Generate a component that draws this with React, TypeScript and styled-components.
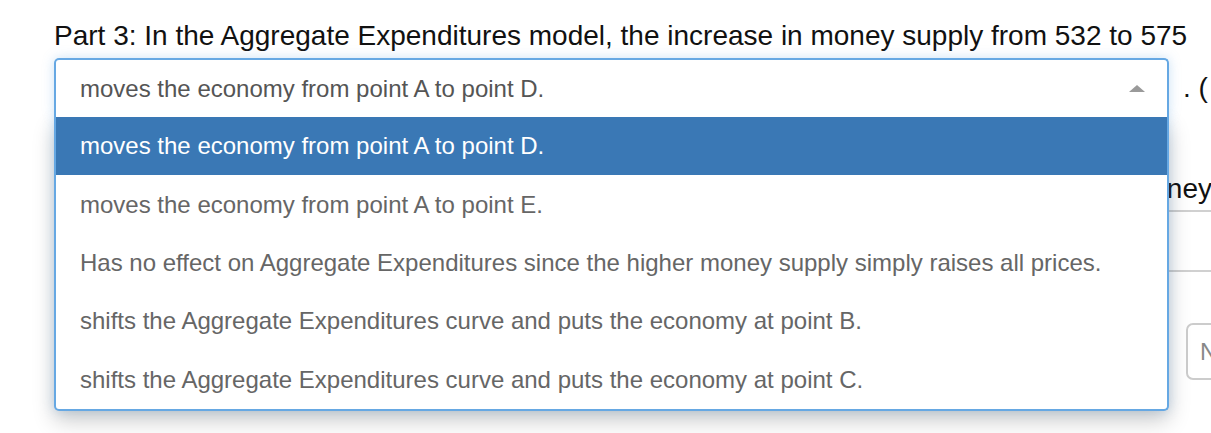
import React from 'react';
import styled, { createGlobalStyle } from 'styled-components';

const GlobalStyle = createGlobalStyle`
  html, body {
    margin: 0;
    padding: 0;
    background: #ffffff;
    font-family: 'Liberation Sans', Arial, sans-serif;
  }
  html {
    overflow: hidden;
  }
`;

const Page = styled.div`
  width: 1211px;
  height: 433px;
  overflow: hidden;
  padding: 16px 0 0 54px;
  box-sizing: border-box;
`;

const Question = styled.p`
  margin: 0;
  font-size: 28px;
  line-height: 40px;
  color: #111;
  white-space: nowrap;
`;

const AnswerRow = styled.div`
  display: flex;
  align-items: center;
  height: 59px;
  margin-top: 2px;
`;

const After = styled.span`
  font-size: 28px;
  color: #111;
  margin-left: 14px;
  white-space: nowrap;
`;

const SelectWrap = styled.div`
  position: relative;
  flex: 0 0 1115px;
  height: 59px;
`;

const Control = styled.div`
  display: flex;
  align-items: center;
  justify-content: space-between;
  height: 59px;
  box-sizing: border-box;
  padding: 0 22px 0 24px;
  border: 2px solid #66a8e3;
  border-bottom: none;
  border-radius: 5px 5px 0 0;
  background: #fff;
  position: relative;
  z-index: 3;
  font-size: 24px;
  color: #555;
`;

const Caret = styled.span`
  width: 0;
  height: 0;
  border-left: 8px solid transparent;
  border-right: 8px solid transparent;
  border-bottom: 7px solid #9a9a9a;
`;

const Menu = styled.ul`
  position: absolute;
  left: 0;
  right: 0;
  top: 59px;
  margin: 0;
  padding: 0;
  list-style: none;
  background: #fff;
  border: 2px solid #66a8e3;
  border-top: none;
  border-radius: 0 0 5px 5px;
  z-index: 2;
  box-shadow: 0 10px 22px rgba(0, 0, 0, 0.2), 0 0 12px rgba(102, 168, 227, 0.3);
  overflow: hidden;
`;

const Glow = styled.div`
  position: absolute;
  inset: 0;
  box-shadow: 0 0 12px rgba(102, 168, 227, 0.35);
  border-radius: 5px;
  z-index: 1;
`;

const Option = styled.li<{ $active?: boolean }>`
  height: 58.4px;
  display: flex;
  align-items: center;
  padding: 0 24px;
  font-size: 24px;
  color: ${p => (p.$active ? '#ffffff' : '#666')};
  background: ${p => (p.$active ? '#3a78b5' : 'transparent')};
  white-space: nowrap;
`;

const Line = styled.p`
  margin: 52px 0 0;
  font-size: 28px;
  line-height: 40px;
  color: #111;
  white-space: nowrap;
`;

const Rule = styled.hr<{ $gap: number }>`
  margin: ${p => p.$gap}px 0 0;
  border: none;
  border-top: 2px solid #d0d0d0;
`;

const InputRow = styled.div`
  display: flex;
  padding: 51px 0 0 1132px;
`;

const Input = styled.div`
  flex: 0 0 160px;
  height: 57px;
  box-sizing: border-box;
  border: 2px solid #ccc;
  border-radius: 7px;
  display: flex;
  align-items: center;
  padding-left: 12px;
  font-size: 24px;
  color: #888;
`;

const options = [
  'moves the economy from point A to point D.',
  'moves the economy from point A to point E.',
  'Has no effect on Aggregate Expenditures since the higher money supply simply raises all prices.',
  'shifts the Aggregate Expenditures curve and puts the economy at point B.',
  'shifts the Aggregate Expenditures curve and puts the economy at point C.',
];

const App: React.FC = () => {
  const selected = options[0];
  return (
    <>
      <GlobalStyle />
      <Page>
        <Question>
          Part 3: In the Aggregate Expenditures model, the increase in money supply from 532 to 575
        </Question>
        <AnswerRow>
          <SelectWrap>
            <Glow />
            <Control>
              <span>{selected}</span>
              <Caret />
            </Control>
            <Menu>
              {options.map(o => (
                <Option key={o} $active={o === selected}>
                  {o}
                </Option>
              ))}
            </Menu>
          </SelectWrap>
          <After>. (</After>
        </AnswerRow>
        <Line>
          Part 4: In the Aggregate Expenditures model, the increase in the domestic stock of the money supply
        </Line>
        <Rule $gap={1} />
        <Rule $gap={58} />
        <InputRow>
          <Input>N</Input>
        </InputRow>
      </Page>
    </>
  );
};

export default App;
